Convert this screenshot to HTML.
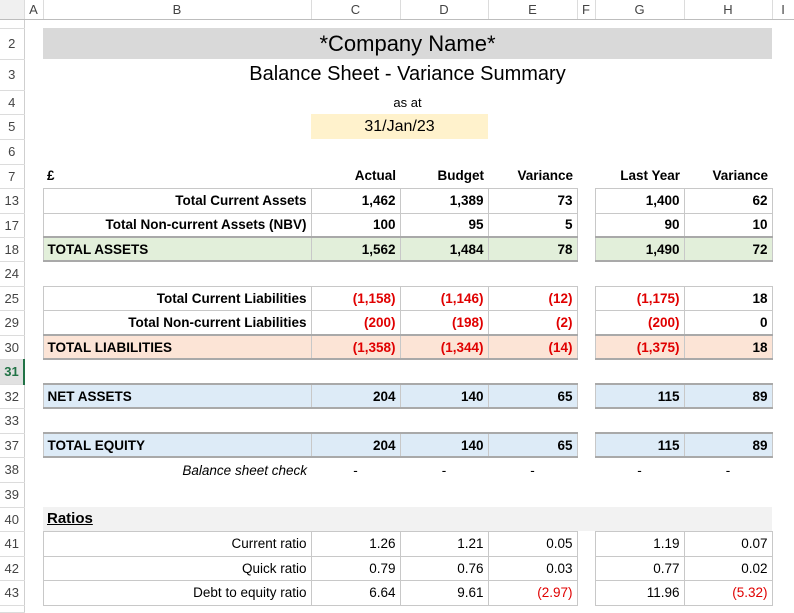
<!DOCTYPE html>
<html><head><meta charset="utf-8"><style>
body{margin:0;background:#fff;font-family:"Liberation Sans",Arial,sans-serif;}
table{border-collapse:collapse;table-layout:fixed;width:794px;}
td{padding:0 4px;white-space:nowrap;overflow:hidden;font-size:13.5px;color:#000;}
td.h{background:#fff;color:#444;text-align:center;font-size:13px;border-bottom:1px solid #dcdcdc;border-right:1px solid #cfcfcf;padding:0;}
tr.ch td{background:#fff;color:#444;text-align:center;font-size:13px;border-bottom:1px solid #bdbdbd;border-right:1px solid #dcdcdc;padding:0;}
.r{text-align:right}.c{text-align:center}
.b{border:1px solid #c8c8c8}
.t{border-top:2px solid #a9a9a9;border-bottom:2px solid #a9a9a9}
.bo td{font-weight:bold}
.red{color:#e00000}
.g{background:#e2efda}.s{background:#fce4d6}.bl{background:#ddebf7}
</style></head><body>
<table>
<colgroup><col style="width:24px"><col style="width:19px"><col style="width:268px"><col style="width:89px"><col style="width:88px"><col style="width:89px"><col style="width:18px"><col style="width:89px"><col style="width:88px"><col style="width:22px"></colgroup>
<tr class="ch" style="height:19px"><td style="background:#f0f0f0"></td><td>A</td><td>B</td><td>C</td><td>D</td><td>E</td><td>F</td><td>G</td><td>H</td><td>I</td></tr>
<tr style="height:9px"><td class="h"></td><td colspan="9"></td></tr>
<tr style="height:31px"><td class="h">2</td><td></td><td colspan="7" class="c" style="background:#d9d9d9;font-size:22px">*Company Name*</td><td></td></tr>
<tr style="height:31px"><td class="h">3</td><td></td><td colspan="7" class="c" style="font-size:20px">Balance Sheet - Variance Summary</td><td></td></tr>
<tr style="height:24px"><td class="h">4</td><td></td><td colspan="7" class="c" style="font-size:13px">as at</td><td></td></tr>
<tr style="height:25px"><td class="h">5</td><td colspan="2"></td><td colspan="2" class="c" style="background:#fff2cc;font-size:16px">31/Jan/23</td><td colspan="5"></td></tr>
<tr style="height:25px"><td class="h">6</td><td colspan="9"></td></tr>
<tr style="height:24px" class="bo"><td class="h" style="font-weight:normal">7</td><td></td><td>£</td><td class="r">Actual</td><td class="r">Budget</td><td class="r">Variance</td><td></td><td class="r">Last Year</td><td class="r">Variance</td><td></td></tr>
<tr style="height:25px" class="bo"><td class="h" style="font-weight:normal">13</td><td></td><td class="b r">Total Current Assets</td><td class="b r">1,462</td><td class="b r">1,389</td><td class="b r">73</td><td></td><td class="b r">1,400</td><td class="b r">62</td><td></td></tr>
<tr style="height:24px" class="bo"><td class="h" style="font-weight:normal">17</td><td></td><td class="b r">Total Non-current Assets (NBV)</td><td class="b r">100</td><td class="b r">95</td><td class="b r">5</td><td></td><td class="b r">90</td><td class="b r">10</td><td></td></tr>
<tr style="height:24px" class="bo"><td class="h" style="font-weight:normal">18</td><td></td><td class="b t g">TOTAL ASSETS</td><td class="b t g r">1,562</td><td class="b t g r">1,484</td><td class="b t g r">78</td><td></td><td class="b t g r">1,490</td><td class="b t g r">72</td><td></td></tr>
<tr style="height:25px"><td class="h">24</td><td colspan="9"></td></tr>
<tr style="height:24px" class="bo"><td class="h" style="font-weight:normal">25</td><td></td><td class="b r">Total Current Liabilities</td><td class="b r red">(1,158)</td><td class="b r red">(1,146)</td><td class="b r red">(12)</td><td></td><td class="b r red">(1,175)</td><td class="b r">18</td><td></td></tr>
<tr style="height:25px" class="bo"><td class="h" style="font-weight:normal">29</td><td></td><td class="b r">Total Non-current Liabilities</td><td class="b r red">(200)</td><td class="b r red">(198)</td><td class="b r red">(2)</td><td></td><td class="b r red">(200)</td><td class="b r">0</td><td></td></tr>
<tr style="height:24px" class="bo"><td class="h" style="font-weight:normal">30</td><td></td><td class="b t s">TOTAL LIABILITIES</td><td class="b t s r red">(1,358)</td><td class="b t s r red">(1,344)</td><td class="b t s r red">(14)</td><td></td><td class="b t s r red">(1,375)</td><td class="b t s r">18</td><td></td></tr>
<tr style="height:25px"><td class="h" style="background:#e1e1e1;color:#217346;font-weight:bold;border-right:2px solid #217346">31</td><td colspan="9"></td></tr>
<tr style="height:24px" class="bo"><td class="h" style="font-weight:normal">32</td><td></td><td class="b t bl">NET ASSETS</td><td class="b t bl r">204</td><td class="b t bl r">140</td><td class="b t bl r">65</td><td></td><td class="b t bl r">115</td><td class="b t bl r">89</td><td></td></tr>
<tr style="height:25px"><td class="h">33</td><td colspan="9"></td></tr>
<tr style="height:24px" class="bo"><td class="h" style="font-weight:normal">37</td><td></td><td class="b t bl">TOTAL EQUITY</td><td class="b t bl r">204</td><td class="b t bl r">140</td><td class="b t bl r">65</td><td></td><td class="b t bl r">115</td><td class="b t bl r">89</td><td></td></tr>
<tr style="height:25px"><td class="h">38</td><td></td><td class="r" style="font-style:italic">Balance sheet check</td><td class="c">-</td><td class="c">-</td><td class="c">-</td><td></td><td class="c">-</td><td class="c">-</td><td></td></tr>
<tr style="height:25px"><td class="h">39</td><td colspan="9"></td></tr>
<tr style="height:24px"><td class="h">40</td><td></td><td colspan="7" style="background:#f2f2f2;font-weight:bold;font-size:15px;text-decoration:underline">Ratios</td><td></td></tr>
<tr style="height:25px"><td class="h">41</td><td></td><td class="b r">Current ratio</td><td class="b r">1.26</td><td class="b r">1.21</td><td class="b r">0.05</td><td></td><td class="b r">1.19</td><td class="b r">0.07</td><td></td></tr>
<tr style="height:24px"><td class="h">42</td><td></td><td class="b r">Quick ratio</td><td class="b r">0.79</td><td class="b r">0.76</td><td class="b r">0.03</td><td></td><td class="b r">0.77</td><td class="b r">0.02</td><td></td></tr>
<tr style="height:25px"><td class="h">43</td><td></td><td class="b r">Debt to equity ratio</td><td class="b r">6.64</td><td class="b r">9.61</td><td class="b r red">(2.97)</td><td></td><td class="b r">11.96</td><td class="b r red">(5.32)</td><td></td></tr>
<tr style="height:7px"><td class="h"></td><td colspan="9"></td></tr>
</table>
</body></html>
